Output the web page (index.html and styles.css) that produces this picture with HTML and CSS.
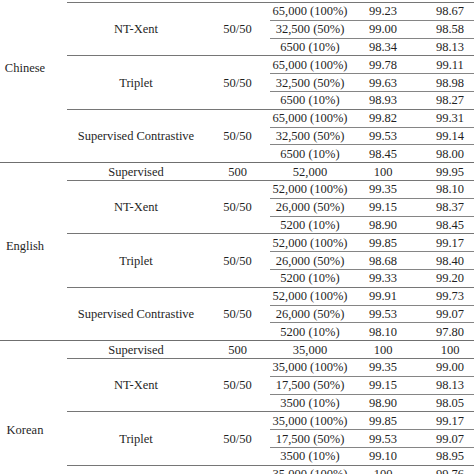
FILE: index.html
```html
<!DOCTYPE html>
<html>
<head>
<meta charset="utf-8">
<link rel="stylesheet" href="styles.css">
</head>
<body>
<table class="results">
  <colgroup>
    <col class="c-lang"><col class="c-method"><col class="c-ratio"><col class="c-samples"><col class="c-a"><col class="c-b">
  </colgroup>
  <tbody>
    <!-- Chinese (its first row lies above the visible crop) -->
    <tr class="lang-start">
      <td class="lang lang-up" rowspan="10">Chinese</td>
      <td></td><td></td><td></td><td></td><td></td>
    </tr>
    <tr class="grp"><td rowspan="3">NT-Xent</td><td rowspan="3">50/50</td><td>65,000 (100%)</td><td>99.23</td><td>98.67</td></tr>
    <tr class="sub"><td>32,500 (50%)</td><td>99.00</td><td>98.58</td></tr>
    <tr class="sub"><td>6500 (10%)</td><td>98.34</td><td>98.13</td></tr>
    <tr class="grp"><td rowspan="3">Triplet</td><td rowspan="3">50/50</td><td>65,000 (100%)</td><td>99.78</td><td>99.11</td></tr>
    <tr class="sub"><td>32,500 (50%)</td><td>99.63</td><td>98.98</td></tr>
    <tr class="sub"><td>6500 (10%)</td><td>98.93</td><td>98.27</td></tr>
    <tr class="grp"><td rowspan="3">Supervised Contrastive</td><td rowspan="3">50/50</td><td>65,000 (100%)</td><td>99.82</td><td>99.31</td></tr>
    <tr class="sub"><td>32,500 (50%)</td><td>99.53</td><td>99.14</td></tr>
    <tr class="sub"><td>6500 (10%)</td><td>98.45</td><td>98.00</td></tr>
    <!-- English -->
    <tr class="lang-start">
      <td class="lang lang-up" rowspan="10">English</td>
      <td>Supervised</td><td>500</td><td>52,000</td><td>100</td><td>99.95</td>
    </tr>
    <tr class="grp"><td rowspan="3">NT-Xent</td><td rowspan="3">50/50</td><td>52,000 (100%)</td><td>99.35</td><td>98.10</td></tr>
    <tr class="sub"><td>26,000 (50%)</td><td>99.15</td><td>98.37</td></tr>
    <tr class="sub"><td>5200 (10%)</td><td>98.90</td><td>98.45</td></tr>
    <tr class="grp"><td rowspan="3">Triplet</td><td rowspan="3">50/50</td><td>52,000 (100%)</td><td>99.85</td><td>99.17</td></tr>
    <tr class="sub"><td>26,000 (50%)</td><td>98.68</td><td>98.40</td></tr>
    <tr class="sub"><td>5200 (10%)</td><td>99.33</td><td>99.20</td></tr>
    <tr class="grp"><td rowspan="3">Supervised Contrastive</td><td rowspan="3">50/50</td><td>52,000 (100%)</td><td>99.91</td><td>99.73</td></tr>
    <tr class="sub"><td>26,000 (50%)</td><td>99.53</td><td>99.07</td></tr>
    <tr class="sub"><td>5200 (10%)</td><td>98.10</td><td>97.80</td></tr>
    <!-- Korean -->
    <tr class="lang-start">
      <td class="lang" rowspan="10">Korean</td>
      <td>Supervised</td><td>500</td><td>35,000</td><td>100</td><td>100</td>
    </tr>
    <tr class="grp"><td rowspan="3">NT-Xent</td><td rowspan="3">50/50</td><td>35,000 (100%)</td><td>99.35</td><td>99.00</td></tr>
    <tr class="sub"><td>17,500 (50%)</td><td>99.15</td><td>98.13</td></tr>
    <tr class="sub"><td>3500 (10%)</td><td>98.90</td><td>98.05</td></tr>
    <tr class="grp"><td rowspan="3">Triplet</td><td rowspan="3">50/50</td><td>35,000 (100%)</td><td>99.85</td><td>99.17</td></tr>
    <tr class="sub"><td>17,500 (50%)</td><td>99.53</td><td>99.07</td></tr>
    <tr class="sub"><td>3500 (10%)</td><td>99.10</td><td>98.95</td></tr>
    <tr class="grp"><td rowspan="3">Supervised Contrastive</td><td rowspan="3">50/50</td><td>35,000 (100%)</td><td>100</td><td>99.76</td></tr>
    <tr class="sub"><td></td><td></td><td></td></tr>
    <tr class="sub"><td></td><td></td><td></td></tr>
  </tbody>
</table>
</body>
</html>
```

FILE: styles.css
```css
html, body {
  margin: 0;
  padding: 0;
  background: #ffffff;
  overflow: hidden;
  width: 474px;
  height: 474px;
}

.results {
  border-collapse: collapse;
  table-layout: fixed;
  width: 501px;
  margin-top: -15.8px;
  margin-left: -17px;
  font-family: "Liberation Serif", "Times New Roman", serif;
  font-size: 12.5px;
  color: #1f1f1f;
}

.c-lang { width: 84px; }
.c-method { width: 138px; }
.c-ratio { width: 65px; }
.c-samples { width: 80px; }
.c-a { width: 66px; }
.c-b { width: 68px; }

.results td {
  height: 17.8px;
  padding: 0;
  text-align: center;
  vertical-align: middle;
  line-height: 14px;
  white-space: nowrap;
  box-sizing: border-box;
}

.results tr.lang-start td {
  border-top: 1px solid #6f6f6f;
}

.results tr.grp td {
  border-top: 1px solid #767676;
}

.results tr.sub td {
  border-top: 1px solid #858585;
}

.results td.lang-up {
  padding-bottom: 11px;
}
```
